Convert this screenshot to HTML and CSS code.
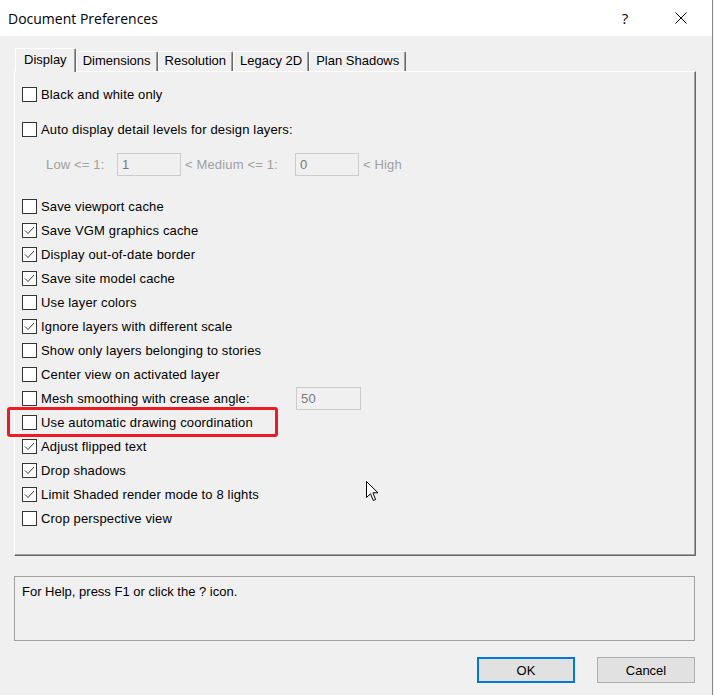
FILE: index.html
```html
<!DOCTYPE html>
<html>
  <head>
    <meta charset="utf-8" />
    <link rel="stylesheet" href="styles.css">
  </head>
  <body>
    <div class="window">
      <header class="titlebar">
        <div class="title">Document Preferences</div>
        <div class="title-btn help-btn">?</div>
        <div class="title-btn close-btn">
          <svg width="12" height="12" viewBox="0 0 12 12">
            <path d="M0.5 0.5 L11.5 11.5 M11.5 0.5 L0.5 11.5" stroke="#000" stroke-width="1" fill="none" />
          </svg>
        </div>
      </header>

      <main class="content">
        <div class="tabs">
          <div class="tab active">Display</div>
          <div class="tab">Dimensions</div>
          <div class="tab">Resolution</div>
          <div class="tab">Legacy 2D</div>
          <div class="tab">Plan Shadows</div>
        </div>

        <section class="panel">
          <label class="row first"><span class="box"></span>Black and white only</label>
          <label class="row spaced"><span class="box"></span>Auto display detail levels for design layers:</label>

          <div class="levels">
            <span class="lvl-low">Low &lt;= 1:</span>
            <span class="field">1</span>
            <span class="lvl-mid">&lt; Medium &lt;= 1:</span>
            <span class="field">0</span>
            <span class="lvl-high">&lt; High</span>
          </div>

          <label class="row after-levels"><span class="box"></span>Save viewport cache</label>
          <label class="row"><span class="box checked"><svg width="13" height="13" viewBox="0 0 13 13"><path d="M2 6.5 L5 9.5 L11 3" stroke="#3a3a3a" stroke-width="1" fill="none" /></svg></span>Save VGM graphics cache</label>
          <label class="row"><span class="box checked"><svg width="13" height="13" viewBox="0 0 13 13"><path d="M2 6.5 L5 9.5 L11 3" stroke="#3a3a3a" stroke-width="1" fill="none" /></svg></span>Display out-of-date border</label>
          <label class="row"><span class="box checked"><svg width="13" height="13" viewBox="0 0 13 13"><path d="M2 6.5 L5 9.5 L11 3" stroke="#3a3a3a" stroke-width="1" fill="none" /></svg></span>Save site model cache</label>
          <label class="row"><span class="box"></span>Use layer colors</label>
          <label class="row"><span class="box checked"><svg width="13" height="13" viewBox="0 0 13 13"><path d="M2 6.5 L5 9.5 L11 3" stroke="#3a3a3a" stroke-width="1" fill="none" /></svg></span>Ignore layers with different scale</label>
          <label class="row"><span class="box"></span>Show only layers belonging to stories</label>
          <label class="row"><span class="box"></span>Center view on activated layer</label>
          <label class="row"><span class="box"></span><span class="mesh-label">Mesh smoothing with crease angle:</span><span class="field mesh-field">50</span></label>
          <label class="row marked"><span class="box"></span>Use automatic drawing coordination<span class="highlight"></span></label>
          <label class="row"><span class="box checked"><svg width="13" height="13" viewBox="0 0 13 13"><path d="M2 6.5 L5 9.5 L11 3" stroke="#3a3a3a" stroke-width="1" fill="none" /></svg></span>Adjust flipped text</label>
          <label class="row"><span class="box checked"><svg width="13" height="13" viewBox="0 0 13 13"><path d="M2 6.5 L5 9.5 L11 3" stroke="#3a3a3a" stroke-width="1" fill="none" /></svg></span>Drop shadows</label>
          <label class="row"><span class="box checked"><svg width="13" height="13" viewBox="0 0 13 13"><path d="M2 6.5 L5 9.5 L11 3" stroke="#3a3a3a" stroke-width="1" fill="none" /></svg></span>Limit Shaded render mode to 8 lights</label>
          <label class="row"><span class="box"></span>Crop perspective view</label>

          <svg class="cursor" width="13" height="21" viewBox="0 0 13 21">
            <path d="M0.5 0.5 L0.5 16.5 L4.5 12.7 L7.3 19.5 L9.6 18.5 L6.9 11.8 L12 11.8 Z" fill="#fff" stroke="#000" stroke-width="1" />
          </svg>
        </section>

        <div class="help-box">For Help, press F1 or click the ? icon.</div>

        <div class="buttons">
          <button class="btn default">OK</button>
          <button class="btn">Cancel</button>
        </div>
      </main>
    </div>
  </body>
</html>
```

FILE: styles.css
```css
:root {
  --face: #f0f0f0;
  --shadow: #a0a0a0;
  --dark-shadow: #696969;
  --disabled: #a0a0a0;
  --text: #000;
}

* {
  box-sizing: border-box;
}

body {
  margin: 0;
  background: var(--face);
  color: var(--text);
  font-family: "Liberation Sans", Arial, sans-serif;
  font-size: 13px;
}

.window {
  position: relative;
  width: 713px;
  height: 695px;
  border-right: 1px solid #8a8a8a;
  overflow: hidden;
}

/* Title bar */
.titlebar {
  display: flex;
  align-items: center;
  height: 36px;
  background: #fff;
}

.title {
  margin-left: 8px;
  font-family: "Open Sans", sans-serif;
  font-size: 14px;
  flex: 1;
}

.title-btn {
  display: flex;
  align-items: center;
  justify-content: center;
  width: 46px;
  height: 36px;
  font-family: "Open Sans", sans-serif;
  font-size: 15px;
}

.help-btn {
  margin-right: 10px;
}

.close-btn {
  margin-right: 8px;
}

/* Tabs */
.content {
  padding-left: 14px;
}

.tabs {
  position: relative;
  z-index: 1;
  display: flex;
  align-items: flex-end;
  height: 35px;
  padding-left: 1px;
}

.tab {
  height: 20px;
  line-height: 18px;
  padding: 0 6px;
  border-top: 1px solid #fff;
  border-left: 1px solid #fff;
  border-right: 1px solid var(--dark-shadow);
  border-radius: 2px 2px 0 0;
  box-shadow: inset -1px 0 0 var(--shadow);
  white-space: nowrap;
}

.tab.active {
  height: 24px;
  line-height: 21px;
  padding: 0 8px;
  margin-bottom: -1px;
  background: var(--face);
}

/* Panel */
.panel {
  position: relative;
  width: 682px;
  height: 485px;
  padding-left: 7px;
  letter-spacing: 0.15px;
  border-top: 1px solid #fff;
  border-left: 1px solid #fff;
  border-right: 1px solid var(--dark-shadow);
  border-bottom: 1px solid var(--dark-shadow);
  box-shadow: inset -1px -1px 0 var(--shadow);
}

.row {
  position: relative;
  display: flex;
  align-items: center;
  height: 24px;
  white-space: nowrap;
}

.row.first {
  margin-top: 10px;
}

.row.spaced {
  margin-top: 11px;
}

.row.after-levels {
  margin-top: 18px;
}

.box {
  flex-shrink: 0;
  width: 15px;
  height: 15px;
  margin-right: 4px;
  border: 1px solid #333;
  background: #fff;
}

.box svg {
  display: block;
}

.levels {
  display: flex;
  align-items: center;
  height: 24px;
  margin-top: 11px;
  padding-left: 24px;
  color: var(--disabled);
}

.lvl-low {
  width: 71px;
}

.lvl-mid {
  width: 110px;
  margin-left: 4px;
}

.lvl-high {
  margin-left: 4px;
}

.field {
  display: inline-block;
  width: 64px;
  height: 23px;
  line-height: 21px;
  padding-left: 4px;
  border: 1px solid #cccccc;
  background: var(--face);
  color: #7a7a7a;
}

.mesh-label {
  width: 255px;
}

.mesh-field {
  width: 65px;
}

/* Annotation */
.highlight {
  position: absolute;
  left: -15px;
  top: -3px;
  width: 271px;
  height: 30px;
  border: 3px solid #ec1c24;
  border-radius: 3px;
}

.cursor {
  position: absolute;
  left: 351px;
  top: 409px;
}

/* Help and buttons */
.help-box {
  width: 681px;
  height: 65px;
  margin-top: 20px;
  padding: 7px 7px;
  line-height: 16px;
  border: 1px solid var(--shadow);
}

.buttons {
  display: flex;
  justify-content: flex-end;
  gap: 22px;
  width: 681px;
  margin-top: 16px;
}

.btn {
  width: 98px;
  height: 26px;
  padding: 0;
  border: 1px solid #adadad;
  background: #e1e1e1;
  color: var(--text);
  font-family: "Liberation Sans", Arial, sans-serif;
  font-size: 13px;
}

.btn.default {
  border: 2px solid #0078d7;
}
```
